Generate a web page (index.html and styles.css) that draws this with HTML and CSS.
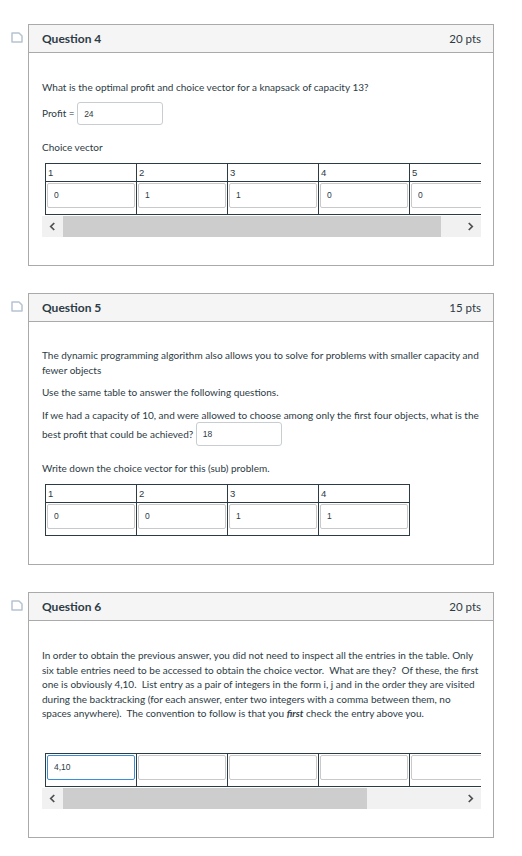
FILE: index.html
```html
<!DOCTYPE html>
<html>
<head>
<meta charset="utf-8">
<link rel="stylesheet" href="styles.css">
</head>
<body>
<div class="quiz">

  <div class="question">
    <div class="flag"><svg viewBox="0 0 12 11"><path d="M1 1 H8 L11 4 V10 H1 Z" fill="none" stroke="#b6c4d2" stroke-width="1.5" stroke-linejoin="round"/></svg></div>
    <div class="card">
      <div class="card-head"><span class="q-title">Question 4</span><span class="q-pts">20 pts</span></div>
      <div class="card-body">
        <p class="text">What is the optimal profit and choice vector for a knapsack of capacity 13?</p>
        <p class="inline-answer profit">Profit =&nbsp;<input class="answer" type="text" value="24" readonly></p>
        <p class="text label">Choice vector</p>
        <div class="scroller">
          <div class="clip">
            <table class="vec">
              <tr><th>1</th><th>2</th><th>3</th><th>4</th><th>5</th></tr>
              <tr><td><input type="text" value="0" readonly></td><td><input type="text" value="1" readonly></td><td><input type="text" value="1" readonly></td><td><input type="text" value="0" readonly></td><td><input type="text" value="0" readonly></td></tr>
            </table>
          </div>
          <div class="scrollbar">
            <span class="sb-btn"><svg viewBox="0 0 8 10"><path d="M6 1 L2 5 L6 9" fill="none" stroke="#505050" stroke-width="2"/></svg></span>
            <span class="sb-thumb" style="width:378px"></span>
            <span class="sb-track"></span>
            <span class="sb-btn"><svg viewBox="0 0 8 10"><path d="M2 1 L6 5 L2 9" fill="none" stroke="#505050" stroke-width="2"/></svg></span>
          </div>
        </div>
      </div>
    </div>
  </div>

  <div class="question">
    <div class="flag"><svg viewBox="0 0 12 11"><path d="M1 1 H8 L11 4 V10 H1 Z" fill="none" stroke="#b6c4d2" stroke-width="1.5" stroke-linejoin="round"/></svg></div>
    <div class="card">
      <div class="card-head"><span class="q-title">Question 5</span><span class="q-pts">15 pts</span></div>
      <div class="card-body">
        <p class="text">The dynamic programming algorithm also allows you to solve for problems with smaller capacity and<br>fewer objects</p>
        <p class="text gap">Use the same table to answer the following questions.</p>
        <div class="text gap">If we had a capacity of 10, and were allowed to choose among only the first four objects, what is the
          <div class="inline-answer">best profit that could be achieved?&nbsp;<input class="answer" type="text" value="18" readonly></div>
        </div>
        <p class="text label2">Write down the choice vector for this (sub) problem.</p>
        <div class="plain">
          <table class="vec">
            <tr><th>1</th><th>2</th><th>3</th><th>4</th></tr>
            <tr><td><input type="text" value="0" readonly></td><td><input type="text" value="0" readonly></td><td><input type="text" value="1" readonly></td><td><input type="text" value="1" readonly></td></tr>
          </table>
        </div>
      </div>
    </div>
  </div>

  <div class="question">
    <div class="flag"><svg viewBox="0 0 12 11"><path d="M1 1 H8 L11 4 V10 H1 Z" fill="none" stroke="#b6c4d2" stroke-width="1.5" stroke-linejoin="round"/></svg></div>
    <div class="card">
      <div class="card-head"><span class="q-title">Question 6</span><span class="q-pts">20 pts</span></div>
      <div class="card-body">
        <p class="text q6">In order to obtain the previous answer, you did not need to inspect all the entries in the table. Only<br>six table entries need to be accessed to obtain the choice vector.&nbsp; What are they?&nbsp; Of these, the first<br>one is obviously 4,10.&nbsp; List entry as a pair of integers in the form i, j and in the order they are visited<br>during the backtracking (for each answer, enter two integers with a comma between them, no<br>spaces anywhere).&nbsp; The convention to follow is that you <b><i>first</i></b> check the entry above you.</p>
        <div class="scroller q6-table">
          <div class="clip">
            <table class="vec">
              <tr><td><input class="focused" type="text" value="4,10" readonly></td><td><input type="text" value="" readonly></td><td><input type="text" value="" readonly></td><td><input type="text" value="" readonly></td><td><input type="text" value="" readonly></td><td><input type="text" value="" readonly></td></tr>
            </table>
          </div>
          <div class="scrollbar">
            <span class="sb-btn"><svg viewBox="0 0 8 10"><path d="M6 1 L2 5 L6 9" fill="none" stroke="#505050" stroke-width="2"/></svg></span>
            <span class="sb-thumb" style="width:304px"></span>
            <span class="sb-track"></span>
            <span class="sb-btn"><svg viewBox="0 0 8 10"><path d="M2 1 L6 5 L2 9" fill="none" stroke="#505050" stroke-width="2"/></svg></span>
          </div>
        </div>
      </div>
    </div>
  </div>

</div>
</body>
</html>
```
FILE: styles.css
```css
body {
  margin: 0;
  background: #ffffff;
  font-family: Lato, "Liberation Sans", sans-serif;
  color: #2d3b45;
}

.quiz {
  padding-top: 24px;
  display: flex;
  flex-direction: column;
  gap: 27px;
}

.question {
  display: flex;
  align-items: flex-start;
}

.flag {
  width: 28px;
  flex: none;
  box-sizing: border-box;
  padding: 8px 0 0 11px;
}

.flag svg {
  display: block;
  width: 12px;
  height: 11px;
}

.card {
  width: 466px;
  flex: none;
  box-sizing: border-box;
  border: 1px solid #aaaaaa;
}

.card-head {
  height: 27px;
  background: #f5f5f5;
  border-bottom: 1px solid #aaaaaa;
  display: flex;
  align-items: center;
  justify-content: space-between;
  padding: 0 12px 0 13px;
}

.q-title {
  font-weight: 700;
  font-size: 12px;
}

.q-pts {
  font-size: 11.5px;
}

.card-body {
  padding: 26.5px 12px 28px 13px;
  font-size: 10px;
  line-height: 14.5px;
}

.text {
  margin: 0;
}

.gap {
  margin-top: 8px;
}

.inline-answer {
  display: flex;
  align-items: center;
  margin: 0;
  white-space: nowrap;
}

.profit {
  margin-top: 8px;
}

.label {
  margin-top: 15px;
}

.label2 {
  margin-top: 15px;
}

.q6 {
  margin-top: 1px;
}

input.answer {
  width: 86px;
  height: 23px;
  box-sizing: border-box;
  border: 1px solid #c7cdd1;
  border-radius: 3px;
  padding: 0 6px;
  margin: 0;
  font-family: "Liberation Sans", sans-serif;
  font-size: 8.5px;
  color: #2d3b45;
  background: #fff;
}

.inline-answer input.answer {
  height: 24px;
}

.profit input.answer {
  height: 23px;
}

.scroller {
  margin-top: 8px;
  width: 439px;
}

.q6-table {
  margin-top: 32px;
}

.clip {
  overflow: hidden;
  padding-left: 3px;
}

.plain {
  margin-top: 8px;
  padding-left: 3px;
}

table.vec {
  border-collapse: collapse;
  table-layout: fixed;
  border: 1px solid #2d3b45;
}

table.vec th,
table.vec td {
  width: 90px;
  border: 1px solid #2d3b45;
  padding: 0;
  vertical-align: top;
}

table.vec th {
  height: 18px;
  text-align: left;
  font-weight: 400;
  font-family: "Liberation Sans", sans-serif;
  font-size: 9.5px;
  line-height: 13px;
  padding: 2px 2px 0;
  box-sizing: border-box;
}

table.vec td {
  height: 33px;
  padding: 1px 1px 0;
  box-sizing: border-box;
}

table.vec td input {
  display: block;
  width: 88px;
  height: 25px;
  box-sizing: border-box;
  margin: 0;
  border: 1px solid #c9c9c9;
  border-radius: 2px;
  padding: 0 6px;
  font-family: "Liberation Sans", sans-serif;
  font-size: 8.5px;
  color: #2d3b45;
  background: #fff;
}

table.vec td input.focused {
  border: 1px solid #3a8fd9;
}

.scrollbar {
  display: flex;
  height: 21px;
  margin-top: 1px;
}

.sb-btn {
  width: 21px;
  flex: none;
  background: #f1f1f1;
  display: flex;
  align-items: center;
  justify-content: center;
}

.sb-btn svg {
  width: 7px;
  height: 9px;
  display: block;
}

.sb-thumb {
  flex: none;
  background: #cdcdcd;
}

.sb-track {
  flex: 1;
  background: #f1f1f1;
}
```
